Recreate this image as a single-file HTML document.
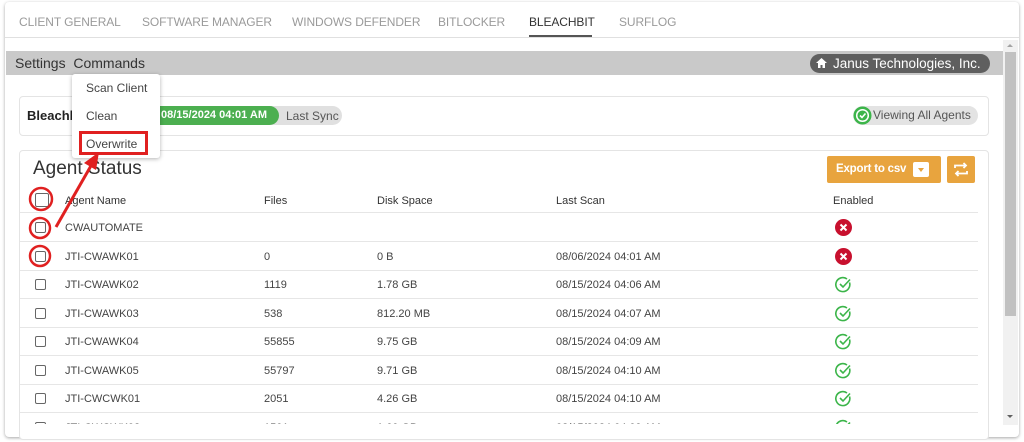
<!DOCTYPE html>
<html><head><meta charset="utf-8"><style>
*{box-sizing:border-box;margin:0;padding:0}
body{width:1024px;height:442px;background:#fff;font-family:"Liberation Sans",sans-serif;position:relative;overflow:hidden;color:#333}
.a{position:absolute}
.frame{left:5px;top:2px;width:1014px;height:435px;border-radius:4px;box-shadow:0 1px 3px rgba(0,0,0,.35);background:#fff;overflow:hidden}
.tab{position:absolute;top:13px;font-size:12px;color:#9a9a9a;letter-spacing:-.1px}
.card{border:1px solid #e4e4e4;border-radius:4px;background:#fff}
.row{position:absolute;left:20px;width:958px;height:29px;border-bottom:1px solid #e6e6e6;font-size:11px;color:#444}
.row span{position:absolute;top:9px}
.cb{position:absolute;left:15px;top:9px;width:11px;height:11px;border:1.5px solid #666;border-radius:2px}
.c1{left:45px}.c2{left:244px}.c3{left:357px}.c4{left:536px}
.ok,.no{position:absolute;left:815px;top:6px;width:17px;height:17px}
</style></head><body>
<div class="a frame">
 <div class="a" style="left:0;top:35px;width:1014px;height:1px;background:#e0e0e0"></div>
 <div class="tab" style="left:14px">CLIENT GENERAL</div>
 <div class="tab" style="left:137px">SOFTWARE MANAGER</div>
 <div class="tab" style="left:287px">WINDOWS DEFENDER</div>
 <div class="tab" style="left:433px">BITLOCKER</div>
 <div class="tab" style="left:524px;color:#333">BLEACHBIT</div>
 <div class="a" style="left:524px;top:33px;width:63px;height:2px;background:#555"></div>
 <div class="tab" style="left:614px">SURFLOG</div>
</div>
<div class="a" style="left:6px;top:51px;width:997px;height:24px;background:#c9c9c9"></div>
<div class="a" style="left:15px;top:55px;font-size:14px;color:#333">Settings&nbsp; Commands</div>
<div class="a" style="left:810px;top:54px;width:180px;height:19px;border-radius:10px;background:#5f5f5f;color:#fff;font-size:13.5px;line-height:19px;padding-left:23px">Janus Technologies, Inc.</div>
<svg class="a" style="left:815px;top:57px" width="13" height="12" viewBox="0 0 13 12"><path d="M6.5 1L1 6h2v5h2.5V8h2v3H10V6h2z" fill="#fff"/></svg>
<div class="a" style="left:1003px;top:40px;width:15px;height:385px;background:#f1f1f1"></div>
<div class="a" style="left:1005px;top:52px;width:11px;height:264px;background:#c1c1c1"></div>
<div class="a" style="left:1007px;top:44px;width:0;height:0;border:3.5px solid transparent;border-bottom-color:#a3a3a3;border-top:0"></div>
<div class="a" style="left:1007px;top:415px;width:0;height:0;border:3.5px solid transparent;border-top-color:#606060;border-bottom:0"></div>
<div class="a card" style="left:19px;top:96px;width:970px;height:40px"></div>
<div class="a" style="left:27px;top:108px;font-size:13px;font-weight:bold;color:#222">Bleachbit</div>
<div class="a" style="left:140px;top:106px;width:202px;height:19px;border-radius:10px;background:#e0e0e0"></div>
<div class="a" style="left:140px;top:106px;width:139px;height:19px;border-radius:10px;background:#4caf50;color:#fff;font-size:11px;font-weight:bold;line-height:19px;padding-left:21px">08/15/2024 04:01 AM</div>
<div class="a" style="left:286px;top:109px;font-size:12px;color:#555">Last Sync</div>
<div class="a" style="left:853px;top:106px;width:125px;height:19px;border-radius:10px;background:#e3e3e3;font-size:12px;color:#555;line-height:19px;padding-left:20px">Viewing All Agents</div>
<svg class="a" style="left:853px;top:106px" width="19" height="19" viewBox="0 0 19 19"><circle cx="9.5" cy="9.5" r="9" fill="#3cb54a"/><circle cx="9.5" cy="9.5" r="5.8" fill="none" stroke="#fff" stroke-width="1.5"/><path d="M7 9.5l2 2 3.5-4" fill="none" stroke="#fff" stroke-width="1.6"/></svg>
<div class="a card" style="left:19px;top:150px;width:970px;height:290px"></div>
<div class="a" style="left:33px;top:158px;font-size:19px;color:#333">Agent Status</div>
<div class="a" style="left:827px;top:156px;width:114px;height:27px;background:#e8a43e;border-radius:2px;color:#fff;font-size:11.5px;font-weight:bold;line-height:27px;padding-left:9px;letter-spacing:-.2px">Export to csv</div>
<div class="a" style="left:913px;top:162px;width:16px;height:15px;background:#fff;border-radius:2px"></div>
<div class="a" style="left:918px;top:168px;width:0;height:0;border:3px solid transparent;border-top:4px solid #e8a43e"></div>
<div class="a" style="left:947px;top:156px;width:28px;height:27px;background:#e8a43e;border-radius:2px"></div>
<svg class="a" style="left:953px;top:161px" width="16" height="17" viewBox="0 0 16 17"><path d="M2 7V4.5h11M10.5 2l2.5 2.5L10.5 7M14 10v2.5H3M5.5 10L3 12.5 5.5 15" fill="none" stroke="#fff" stroke-width="1.8"/></svg>
<div class="a" style="left:20px;top:186px;width:958px;height:27px;border-bottom:1px solid #e6e6e6;font-size:11px;color:#333">
 <div class="cb" style="left:15px;top:7px;width:14px;height:14px"></div>
 <span class="a" style="left:45px;top:9px">Agent Name</span><span class="a" style="left:244px;top:9px">Files</span><span class="a" style="left:357px;top:9px">Disk Space</span><span class="a" style="left:536px;top:9px">Last Scan</span><span class="a" style="left:813px;top:9px">Enabled</span>
</div>
<div class="a" style="left:20px;top:213px;width:960px;height:211px;overflow:hidden">
<div style="position:relative">
<div class="row" style="left:0;top:0"><div class="cb"></div><span class="c1">CWAUTOMATE</span><svg class="no" viewBox="0 0 17 17"><circle cx="8.5" cy="8.5" r="8.5" fill="#c8102e"/><path d="M5.5 5.5l6 6M11.5 5.5l-6 6" stroke="#fff" stroke-width="2"/></svg></div>
<div class="row" style="left:0;top:28.5px"><div class="cb"></div><span class="c1">JTI-CWAWK01</span><span class="c2">0</span><span class="c3">0 B</span><span class="c4">08/06/2024 04:01 AM</span><svg class="no" viewBox="0 0 17 17"><circle cx="8.5" cy="8.5" r="8.5" fill="#c8102e"/><path d="M5.5 5.5l6 6M11.5 5.5l-6 6" stroke="#fff" stroke-width="2"/></svg></div>
<div class="row" style="left:0;top:57px"><div class="cb"></div><span class="c1">JTI-CWAWK02</span><span class="c2">1119</span><span class="c3">1.78 GB</span><span class="c4">08/15/2024 04:06 AM</span><svg class="ok" viewBox="0 0 17 17"><path d="M14.5 6.5A7 7 0 1 1 12 3" fill="none" stroke="#3cb54a" stroke-width="1.6"/><path d="M5 8l3 3 7-7.5" fill="none" stroke="#3cb54a" stroke-width="1.6"/></svg></div>
<div class="row" style="left:0;top:85.5px"><div class="cb"></div><span class="c1">JTI-CWAWK03</span><span class="c2">538</span><span class="c3">812.20 MB</span><span class="c4">08/15/2024 04:07 AM</span><svg class="ok" viewBox="0 0 17 17"><path d="M14.5 6.5A7 7 0 1 1 12 3" fill="none" stroke="#3cb54a" stroke-width="1.6"/><path d="M5 8l3 3 7-7.5" fill="none" stroke="#3cb54a" stroke-width="1.6"/></svg></div>
<div class="row" style="left:0;top:114px"><div class="cb"></div><span class="c1">JTI-CWAWK04</span><span class="c2">55855</span><span class="c3">9.75 GB</span><span class="c4">08/15/2024 04:09 AM</span><svg class="ok" viewBox="0 0 17 17"><path d="M14.5 6.5A7 7 0 1 1 12 3" fill="none" stroke="#3cb54a" stroke-width="1.6"/><path d="M5 8l3 3 7-7.5" fill="none" stroke="#3cb54a" stroke-width="1.6"/></svg></div>
<div class="row" style="left:0;top:142.5px"><div class="cb"></div><span class="c1">JTI-CWAWK05</span><span class="c2">55797</span><span class="c3">9.71 GB</span><span class="c4">08/15/2024 04:10 AM</span><svg class="ok" viewBox="0 0 17 17"><path d="M14.5 6.5A7 7 0 1 1 12 3" fill="none" stroke="#3cb54a" stroke-width="1.6"/><path d="M5 8l3 3 7-7.5" fill="none" stroke="#3cb54a" stroke-width="1.6"/></svg></div>
<div class="row" style="left:0;top:171px"><div class="cb"></div><span class="c1">JTI-CWCWK01</span><span class="c2">2051</span><span class="c3">4.26 GB</span><span class="c4">08/15/2024 04:10 AM</span><svg class="ok" viewBox="0 0 17 17"><path d="M14.5 6.5A7 7 0 1 1 12 3" fill="none" stroke="#3cb54a" stroke-width="1.6"/><path d="M5 8l3 3 7-7.5" fill="none" stroke="#3cb54a" stroke-width="1.6"/></svg></div>
<div class="row" style="left:0;top:199.5px"><div class="cb"></div><span class="c1">JTI-CWCWK02</span><span class="c2">1501</span><span class="c3">1.60 GB</span><span class="c4">08/15/2024 04:09 AM</span><svg class="ok" viewBox="0 0 17 17"><path d="M14.5 6.5A7 7 0 1 1 12 3" fill="none" stroke="#3cb54a" stroke-width="1.6"/><path d="M5 8l3 3 7-7.5" fill="none" stroke="#3cb54a" stroke-width="1.6"/></svg></div>
</div></div>
<div class="a" style="left:72px;top:74px;width:88px;height:84px;background:#fff;border-radius:3px;box-shadow:0 1px 4px rgba(0,0,0,.3)"></div>
<div class="a" style="left:86px;top:81px;font-size:12px;color:#444">Scan Client</div>
<div class="a" style="left:86px;top:109px;font-size:12px;color:#444">Clean</div>
<div class="a" style="left:79px;top:131px;width:69px;height:24px;border:3px solid #e02020"></div>
<div class="a" style="left:86px;top:137px;font-size:12px;color:#444">Overwrite</div>
<svg class="a" style="left:0;top:0" width="200" height="280" viewBox="0 0 200 280">
<circle cx="41" cy="199" r="11" fill="none" stroke="#e02020" stroke-width="2.5"/>
<circle cx="40" cy="228" r="10" fill="none" stroke="#e02020" stroke-width="2.5"/>
<circle cx="40" cy="256" r="10" fill="none" stroke="#e02020" stroke-width="2.5"/>
<path d="M56 227L92 164" stroke="#e02020" stroke-width="3"/>
<path d="M99 152L84 163L96 170Z" fill="#e02020"/>
</svg>
</body></html>
